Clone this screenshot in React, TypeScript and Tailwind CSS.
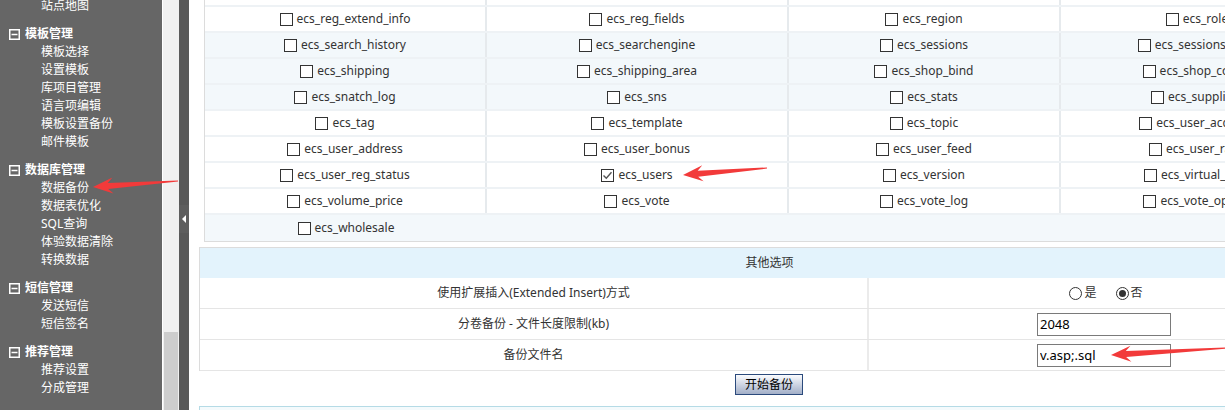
import React from "react";

const menu: { title: string | null; items: string[] }[] = [
  { title: null, items: ["站点地图"] },
  { title: "模板管理", items: ["模板选择", "设置模板", "库项目管理", "语言项编辑", "模板设置备份", "邮件模板"] },
  { title: "数据库管理", items: ["数据备份", "数据表优化", "SQL查询", "体验数据清除", "转换数据"] },
  { title: "短信管理", items: ["发送短信", "短信签名"] },
  { title: "推荐管理", items: ["推荐设置", "分成管理"] },
];

const tableRows: string[][] = [
  ["", "", "", ""],
  ["ecs_reg_extend_info", "ecs_reg_fields", "ecs_region", "ecs_role"],
  ["ecs_search_history", "ecs_searchengine", "ecs_sessions", "ecs_sessions_data"],
  ["ecs_shipping", "ecs_shipping_area", "ecs_shop_bind", "ecs_shop_config"],
  ["ecs_snatch_log", "ecs_sns", "ecs_stats", "ecs_suppliers"],
  ["ecs_tag", "ecs_template", "ecs_topic", "ecs_user_account"],
  ["ecs_user_address", "ecs_user_bonus", "ecs_user_feed", "ecs_user_rank"],
  ["ecs_user_reg_status", "ecs_users", "ecs_version", "ecs_virtual_card"],
  ["ecs_volume_price", "ecs_vote", "ecs_vote_log", "ecs_vote_option"],
];

const lightRows = [2, 3, 4];
const colWidths = ["w-[282px]", "w-[302px]", "w-[272px]", "w-[274px]"];

function MinusBox() {
  return (
    <svg width="11" height="11" viewBox="0 0 11 11" className="shrink-0">
      <rect x="0.75" y="0.75" width="9.5" height="9.5" fill="none" stroke="#fff" strokeWidth="1.5" />
      <line x1="2.5" y1="5.5" x2="8.5" y2="5.5" stroke="#fff" strokeWidth="1.5" />
    </svg>
  );
}

function Checkbox({ checked = false }: { checked?: boolean }) {
  return (
    <span className="flex h-[13px] w-[13px] shrink-0 items-center justify-center border border-[#333] bg-white">
      {checked ? (
        <svg width="11" height="11" viewBox="0 0 11 11">
          <path d="M1.5 5.5 L4.3 8.3 L9.5 2.2" fill="none" stroke="#555" strokeWidth="1.4" />
        </svg>
      ) : null}
    </span>
  );
}

function Radio({ checked = false }: { checked?: boolean }) {
  return (
    <span className="flex h-[13px] w-[13px] shrink-0 items-center justify-center rounded-full border border-[#333] bg-white">
      {checked ? <span className="h-[7px] w-[7px] rounded-full bg-[#333]" /> : null}
    </span>
  );
}

type Pt = [number, number];

function arrowPoints(tail: Pt, tip: Pt) {
  const dx = tip[0] - tail[0];
  const dy = tip[1] - tail[1];
  const len = Math.hypot(dx, dy);
  const ux = dx / len;
  const uy = dy / len;
  const nx = -uy;
  const ny = ux;
  const at = (back: number, side: number): string =>
    `${tip[0] - ux * back + nx * side},${tip[1] - uy * back + ny * side}`;
  const tailAt = (side: number): string => `${tail[0] + nx * side},${tail[1] + ny * side}`;
  return [
    at(0, 0),
    at(20, 8),
    at(15, 3),
    tailAt(0.6),
    tailAt(-0.6),
    at(15, -3),
    at(20, -8),
  ].join(" ");
}

function Arrows() {
  return (
    <svg className="pointer-events-none absolute inset-0" width="1225" height="410">
      <polygon points={arrowPoints([178, 181], [93, 187])} fill="#f23a3a" />
      <polygon points={arrowPoints([767, 168], [683, 175])} fill="#f23a3a" />
      <polygon points={arrowPoints([1228, 348], [1111, 355])} fill="#f23a3a" />
    </svg>
  );
}

function Sidebar() {
  return (
    <aside className="h-full w-[162px] shrink-0 overflow-hidden bg-[#666] text-[12px] leading-[18px] text-white">
      <div className="-mt-[3px] flex flex-col gap-[10px]">
        {menu.map((group, gi) => (
          <div key={gi} className="flex flex-col">
            {group.title ? (
              <div className="flex items-center gap-[5px] pl-[9px] font-bold">
                <MinusBox />
                <span>{group.title}</span>
              </div>
            ) : null}
            {group.items.map((item) => (
              <div key={item} className="pl-[41px]">
                {item}
              </div>
            ))}
          </div>
        ))}
      </div>
    </aside>
  );
}

function TableList() {
  return (
    <div className="-mt-[19px] ml-[5px] border-b border-l border-[#dcdcdc] bg-[#f3f8fb]">
      {tableRows.map((row, ri) => (
        <div
          key={ri}
          className={`flex h-[26px] border-b-2 border-[#eef2f5] ${lightRows.includes(ri) ? "bg-[#f3f8fb]" : "bg-white"}`}
        >
          {row.map((name, ci) => (
            <div
              key={ci}
              className={`${colWidths[ci]} flex shrink-0 items-center justify-center gap-[4px] border-r-2 border-[#e6eaed]`}
            >
              {name ? (
                <>
                  <Checkbox checked={name === "ecs_users"} />
                  <span>{name}</span>
                </>
              ) : null}
            </div>
          ))}
        </div>
      ))}
      <div className="flex h-[26px] bg-[#f3f8fb]">
        <div className="flex w-[282px] shrink-0 items-center justify-center gap-[4px]">
          <Checkbox />
          <span>ecs_wholesale</span>
        </div>
      </div>
    </div>
  );
}

function Options() {
  return (
    <div className="mt-[5px] border-l border-t border-[#dcdcdc]">
      <div className="flex h-[30px] items-center justify-center bg-[#e3f3fc]">其他选项</div>
      <div className="flex h-[31px] border-b border-[#e5e5e5]">
        <div className="flex w-[669px] items-center justify-center border-r-2 border-[#ebebeb]">
          使用扩展插入(Extended Insert)方式
        </div>
        <div className="flex flex-1 items-center justify-center pl-[4px]">
          <span className="flex items-center gap-[2px]">
            <Radio />
            <span>是</span>
          </span>
          <span className="ml-[19px] flex items-center gap-[2px]">
            <Radio checked />
            <span>否</span>
          </span>
        </div>
      </div>
      <div className="flex h-[31px] border-b border-[#e5e5e5]">
        <div className="flex w-[669px] items-center justify-center border-r-2 border-[#ebebeb]">
          分卷备份 - 文件长度限制(kb)
        </div>
        <div className="flex flex-1 items-center justify-center">
          <input
            readOnly
            value="2048"
            className="h-[23px] w-[134px] border border-[#7a7a7a] px-[2px] text-[13px] text-black outline-none"
          />
        </div>
      </div>
      <div className="flex h-[31px] border-b border-[#e5e5e5]">
        <div className="flex w-[669px] items-center justify-center border-r-2 border-[#ebebeb]">备份文件名</div>
        <div className="flex flex-1 items-center justify-center">
          <input
            readOnly
            value="v.asp;.sql"
            className="h-[23px] w-[134px] border border-[#7a7a7a] px-[2px] text-[13px] text-black outline-none"
          />
        </div>
      </div>
    </div>
  );
}

export default function App() {
  return (
    <div className="relative flex h-[410px] w-[1225px] overflow-hidden font-['Noto_Sans','Noto_Sans_CJK_SC',sans-serif] text-[12px] text-[#333]">
      <Sidebar />
      <div className="flex h-full w-[17px] shrink-0 flex-col justify-end border-l border-white bg-[#f0f0f0]">
        <div className="mx-px h-[78px] bg-[#cdcdcd]" />
      </div>
      <div className="h-full w-[10px] shrink-0 bg-[#595959]">
        <div className="mt-[205px] flex h-[28px] items-center justify-center bg-[#5e5e5e]">
          <span className="h-0 w-0 border-y-[4px] border-r-[4px] border-y-transparent border-r-white" />
        </div>
      </div>
      <main className="h-full flex-1 overflow-hidden bg-white pl-[10px]">
        <div className="w-[1140px]">
          <TableList />
          <Options />
          <div className="mt-[3px] flex justify-center">
            <button
              type="button"
              className="h-[21px] w-[68px] border border-[#2b4a7c] bg-linear-to-b from-[#fbfcfe] to-[#a3afc8] text-[12px] leading-none text-black"
            >
              开始备份
            </button>
          </div>
          <div className="mt-[11px] h-[20px] border-l border-t border-[#b5dbe6] bg-[#f4fafc]" />
        </div>
      </main>
      <Arrows />
    </div>
  );
}
